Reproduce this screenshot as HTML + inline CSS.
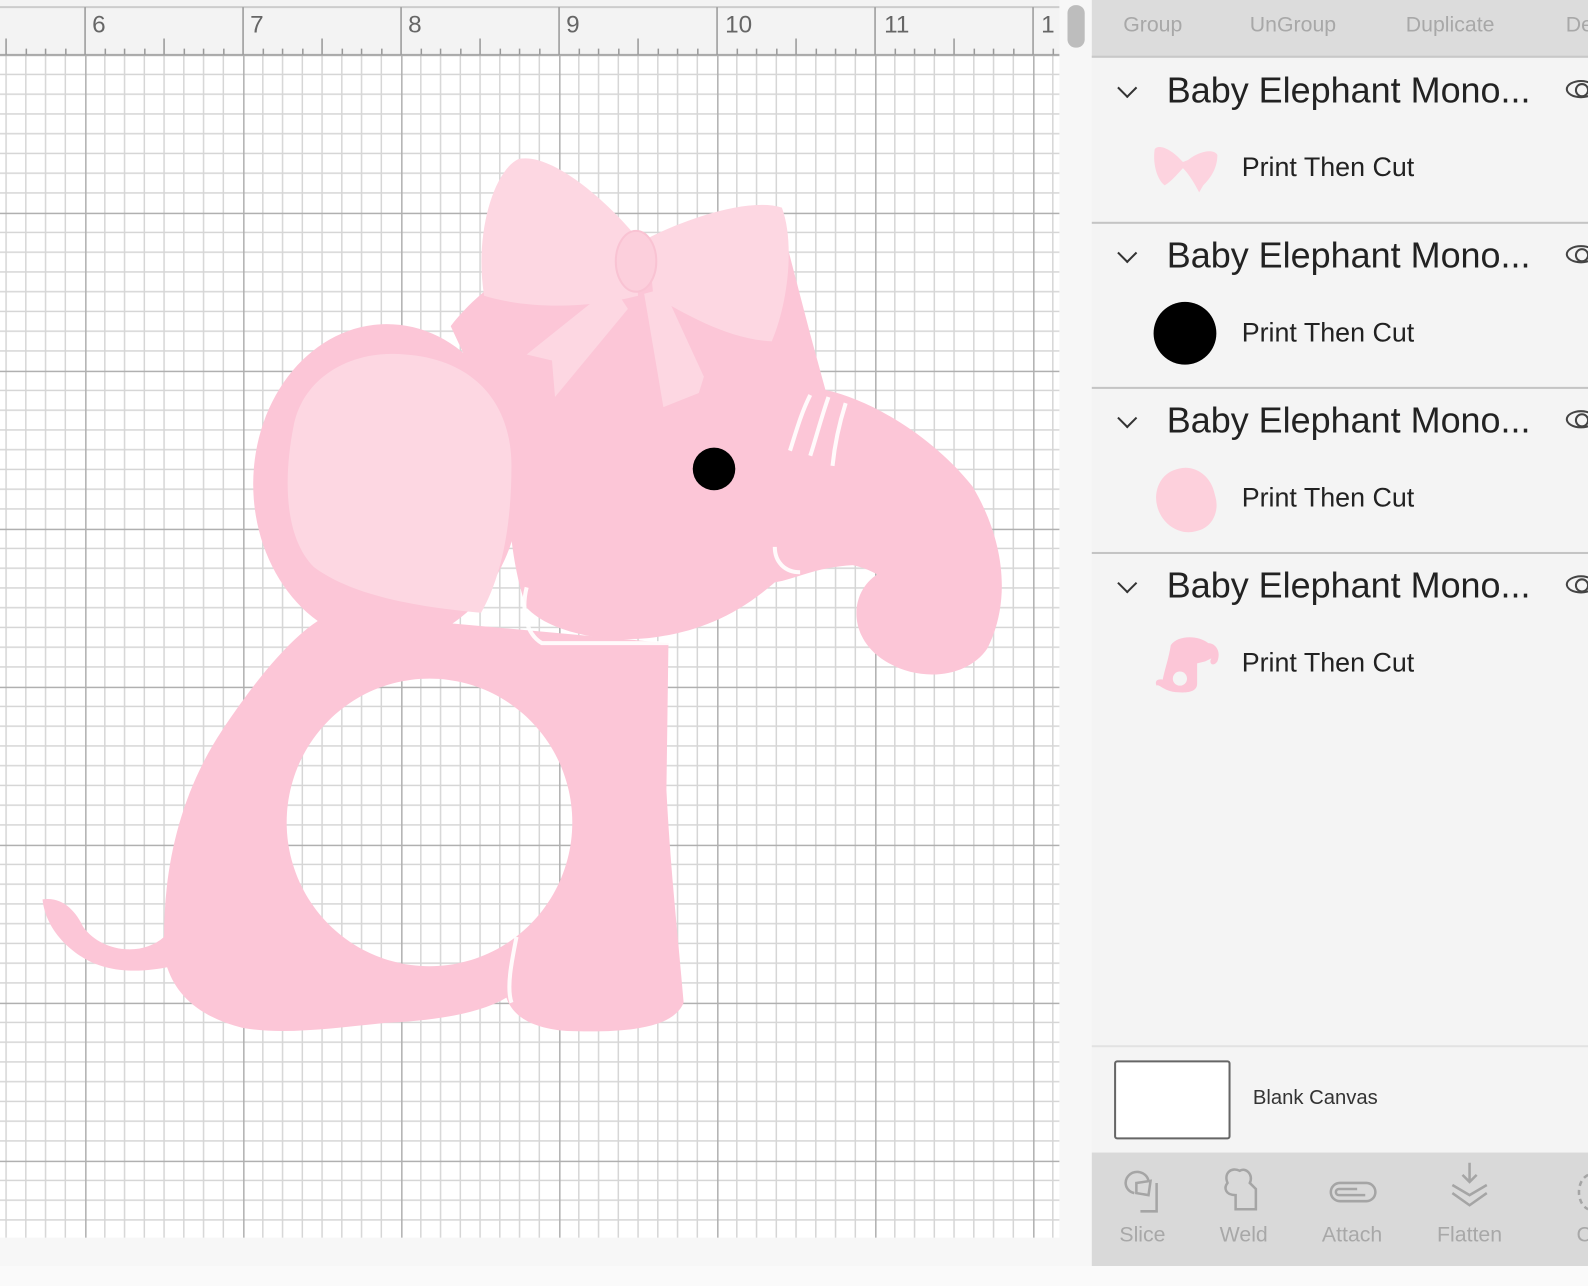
<!DOCTYPE html>
<html><head><meta charset="utf-8"><style>
*{margin:0;padding:0;box-sizing:border-box}
html,body{width:1588px;height:1270px;overflow:hidden;background:#fafafa}
#w{position:absolute;left:0;top:0;width:1568px;height:1254px;transform:scale(1.0128);transform-origin:0 0;background:#f6f6f6;font-family:"Liberation Sans",sans-serif}
.abs{position:absolute}
.panel{left:1078px;top:0;width:510px;height:1270px;background:#f4f4f4}
.tb{left:1078px;top:0;width:510px;height:57px;background:#dcdcdc;border-bottom:2px solid #c8c8c8}
.tb span{position:absolute;top:13px;font-size:21px;color:#a8a8a8}
.hdr{font-size:35.5px;color:#222;left:1152px;white-space:nowrap}
.sub{font-size:26.5px;color:#222;left:1226px}
.sep{left:1078px;width:510px;height:2px;background:#c4c4c4}
.chev{left:1106px;width:14px;height:14px;border-right:2.5px solid #333;border-bottom:2.5px solid #333;transform:rotate(45deg)}
.eye{left:1546px;width:30px;height:18px;border:2.5px solid #444;border-radius:50%}
.eye:after{content:"";position:absolute;left:7px;top:1px;width:10px;height:10px;border:2.5px solid #444;border-radius:50%}
.bt{left:1078px;top:1138px;width:510px;height:112px;background:#d9d9d9}
.bt span{position:absolute;top:70px;font-size:21px;color:#a8a8a8;transform:translateX(-50%)}
</style></head><body><div id="w">
<svg class="abs" style="left:0;top:0" width="1078" height="1270">
<defs>
<pattern id="g" x="84" y="54" width="156" height="156" patternUnits="userSpaceOnUse">
<g stroke="#d6d6d6" stroke-width="1.5">
<path d="M19.5 0V156M39 0V156M58.5 0V156M78 0V156M97.5 0V156M117 0V156M136.5 0V156M0 19.5H156M0 39H156M0 58.5H156M0 78H156M0 97.5H156M0 117H156M0 136.5H156"/>
</g>
<path d="M0.75 0V156M0 0.75H156" stroke="#b0b0b0" stroke-width="1.5"/>
</pattern>
</defs>
<rect x="0" y="0" width="1078" height="1270" fill="#f7f7f7"/>
<rect x="0" y="54" width="1046" height="1168" fill="#fff"/>
<rect x="0" y="54" width="1046" height="1168" fill="url(#g)"/>
<rect x="0" y="0" width="1046" height="54" fill="#f3f3f3"/>
<line x1="0" y1="7" x2="1046" y2="7" stroke="#ccc" stroke-width="2"/>
<line x1="0" y1="54" x2="1046" y2="54" stroke="#aaa" stroke-width="1.5"/>
<g stroke="#999" stroke-width="1.5">
<path d="M84 7V54M240 7V54M396 7V54M552 7V54M708 7V54M864 7V54M1020 7V54"/>
<path d="M6 38V54M26 48V54M45 48V54M65 48V54M104 48V54M123 48V54M143 48V54M162 38V54M182 48V54M201 48V54M221 48V54M260 48V54M279 48V54M299 48V54M318 38V54M338 48V54M357 48V54M377 48V54M416 48V54M435 48V54M455 48V54M474 38V54M494 48V54M513 48V54M533 48V54M572 48V54M591 48V54M611 48V54M630 38V54M650 48V54M669 48V54M689 48V54M728 48V54M747 48V54M767 48V54M786 38V54M806 48V54M825 48V54M845 48V54M884 48V54M903 48V54M923 48V54M942 38V54M962 48V54M981 48V54M1001 48V54M1040 48V54"/>
</g>
<g font-family="Liberation Sans" font-size="24" fill="#666">
<text x="91" y="32">6</text><text x="247" y="32">7</text><text x="403" y="32">8</text><text x="559" y="32">9</text><text x="716" y="32">10</text><text x="873" y="32">11</text><text x="1028" y="32">1</text>
</g>
<rect x="1054" y="5" width="17" height="42" rx="8" fill="#bdbdbd"/>
<path fill="#fcc6d7" fill-rule="evenodd" d="M330,605 L660,635 L658,780 C662,860 670,930 675,990 C665,1015 620,1020 560,1018 C520,1015 505,1000 500,985 C470,1003 420,1008 380,1010 C330,1015 280,1022 240,1015 C200,1005 175,985 165,955 C150,958 120,962 95,952 C70,942 45,918 42,888 C62,885 75,900 82,915 C100,940 140,945 162,925 C162,850 180,780 220,720 C260,660 300,615 330,605 Z M424,670 A141,142 0 1,0 424.1,670 Z"/>
<path fill="#fcc6d7" d="M445,322 C470,290 500,270 520,262 L770,215 L800,330 L815,385 C860,395 920,430 960,480 C990,530 1000,590 975,640 C955,670 905,675 870,650 C835,625 840,580 870,565 C895,555 918,578 908,600 C898,612 882,605 888,590 C880,572 860,562 842,558 C805,560 785,572 765,575 C725,610 685,625 640,630 C590,635 540,622 520,600 C505,560 500,500 500,440 Z"/>
<g stroke="#fff" stroke-width="4" fill="none" opacity="0.9"><path d="M800,390 C790,410 785,430 780,445M818,392 C810,415 805,435 800,450M835,398 C828,420 824,440 822,460M765,540 C765,555 775,565 790,565M520,580 C515,600 518,625 535,635 L660,635M510,925 C505,950 500,975 505,990"/></g>
<ellipse cx="382" cy="478" rx="132" ry="158" fill="#fcc6d7"/>
<path d="M290,420 C300,370 350,345 400,350 C470,355 505,400 505,460 C505,520 495,570 475,605 C420,600 350,590 310,560 C280,530 280,470 290,420 Z" fill="#fdd7e2"/>
<path fill="#fdd7e2" d="M478,292 C468,230 488,168 512,157 C545,150 600,200 625,230 L630,292 C580,305 520,305 478,292Z"/>
<path fill="#fdd7e2" d="M640,235 C680,215 740,195 772,205 C785,240 778,300 762,337 C720,335 680,312 645,292 Z"/>
<path fill="#fdd7e2" d="M605,282 L520,350 L545,356 L548,392 L620,305Z"/>
<path fill="#fdd7e2" d="M636,290 L655,402 L690,388 L695,372 L655,285Z"/>
<ellipse cx="628" cy="258" rx="20" ry="30" fill="#fccfdc" stroke="#f9c3d3" stroke-width="2"/>
<circle cx="705" cy="463" r="21" fill="#000"/>
</svg>

<div class="abs panel"></div>
<div class="abs tb"><span style="left:31px">Group</span><span style="left:156px">UnGroup</span><span style="left:310px">Duplicate</span><span style="left:468px">De</span></div>

<div class="abs chev" style="top:80px"></div><div class="abs hdr" style="top:69px">Baby Elephant Mono...</div><div class="abs eye" style="top:79px"></div>
<svg class="abs" style="left:1138px;top:138px" width="66" height="56"><path d="M30,22 C15,5 3,5 2,10 C0,25 5,40 12,45 C20,40 26,32 30,28 C34,32 40,40 46,52 L50,45 C55,40 64,30 64,15 C60,8 45,12 35,20Z" fill="#fdd3df"/></svg>
<div class="abs sub" style="top:150px">Print Then Cut</div>
<div class="abs sep" style="top:219px"></div>

<div class="abs chev" style="top:243px"></div><div class="abs hdr" style="top:232px">Baby Elephant Mono...</div><div class="abs eye" style="top:242px"></div>
<div class="abs" style="left:1139px;top:298px;width:62px;height:62px;border-radius:50%;background:#000"></div>
<div class="abs sub" style="top:313px">Print Then Cut</div>
<div class="abs sep" style="top:382px"></div>

<div class="abs chev" style="top:406px"></div><div class="abs hdr" style="top:395px">Baby Elephant Mono...</div><div class="abs eye" style="top:405px"></div>
<div class="abs" style="left:1142px;top:462px;width:58px;height:64px;border-radius:50% 50% 45% 55%;background:#fdd0dc;transform:rotate(-15deg)"></div>
<div class="abs sub" style="top:476px">Print Then Cut</div>
<div class="abs sep" style="top:545px"></div>

<div class="abs chev" style="top:569px"></div><div class="abs hdr" style="top:558px">Baby Elephant Mono...</div><div class="abs eye" style="top:568px"></div>
<svg class="abs" style="left:1138px;top:625px" width="70" height="62"><path d="M18,12 C25,2 45,2 55,10 C62,10 68,18 64,28 C60,34 55,30 58,25 L52,28 L44,30 L44,50 C44,58 35,60 20,58 C10,56 6,50 4,52 C2,48 4,45 10,46 C12,36 16,25 18,12Z" fill="#fcc6d7"/><circle cx="27" cy="45" r="7" fill="#f4f4f4"/></svg>
<div class="abs sub" style="top:639px">Print Then Cut</div>

<div class="abs sep" style="top:1032px;background:#e2e2e2"></div>
<div class="abs" style="left:1100px;top:1047px;width:115px;height:78px;background:#fff;border:2px solid #666;border-radius:3px"></div>
<div class="abs" style="left:1237px;top:1073px;font-size:20px;color:#333">Blank Canvas</div>

<div class="abs bt">
<svg class="abs" style="left:0;top:0" width="510" height="70" fill="none" stroke="#a5a5a5" stroke-width="2.5">
<path d="M42,40 C32,38 30,25 40,20 C48,17 55,22 56,28"/><path d="M44,30 L58,28 L56,42 L44,40Z"/><path d="M64,30 V58 H48"/>
<path d="M134,30 C130,20 138,14 146,18 C152,14 160,22 156,30 L162,36 V56 H142 V42 C132,42 130,35 134,30Z"/>
<rect x="236" y="30" width="44" height="18" rx="9"/><path d="M262,36 H244 C240,36 240,42 244,42 H270"/>
<path d="M373,10 V28 M366,22 L373,29 L380,22"/><path d="M356,32 L373,42 L390,32"/><path d="M356,40 L373,52 L390,40"/>
<path d="M490,22 C478,28 478,50 490,56" stroke-dasharray="5 4"/>
</svg>
<span style="left:50px">Slice</span><span style="left:150px">Weld</span><span style="left:257px">Attach</span><span style="left:373px">Flatten</span><span style="left:492px">Co</span>
</div>
<div class="abs" style="left:0;top:1250px;width:1588px;height:20px;background:#fafafa"></div>
</div></body></html>
